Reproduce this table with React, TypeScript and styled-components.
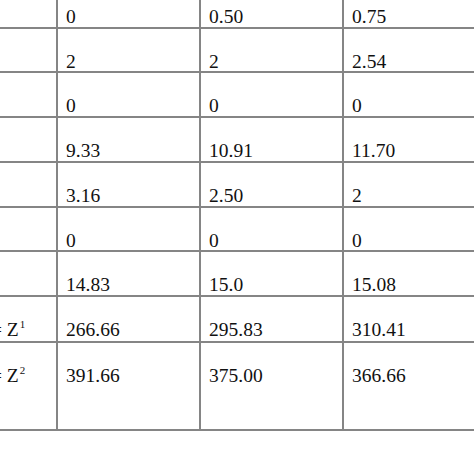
import React from 'react';
import styled, { createGlobalStyle } from 'styled-components';

type RowData = {
  h: number;
  label?: React.ReactNode;
  values: string[];
};

const rows: RowData[] = [
  { h: 45, values: ['0', '0.50', '0.75'] },
  { h: 44, values: ['2', '2', '2.54'] },
  { h: 45, values: ['0', '0', '0'] },
  { h: 45, values: ['9.33', '10.91', '11.70'] },
  { h: 45, values: ['3.16', '2.50', '2'] },
  { h: 44, values: ['0', '0', '0'] },
  { h: 45, values: ['14.83', '15.0', '15.08'] },
  {
    h: 46,
    label: (
      <>
        = Z<sup>1</sup>
      </>
    ),
    values: ['266.66', '295.83', '310.41'],
  },
  {
    h: 88,
    label: (
      <>
        = Z<sup>2</sup>
      </>
    ),
    values: ['391.66', '375.00', '366.66'],
  },
];

const App: React.FC = () => {
  return (
    <>
      <GlobalStyle />
      <Page>
        <Table>
          {rows.map((row, i) => (
            <Row key={i} $h={row.h}>
              <LabelCell>{row.label}</LabelCell>
              {row.values.map((v, j) => (
                <Cell key={j}>{v}</Cell>
              ))}
            </Row>
          ))}
        </Table>
      </Page>
    </>
  );
};

const GlobalStyle = createGlobalStyle`
  html, body {
    margin: 0;
    padding: 0;
    background: #fff;
    overflow: hidden;
  }
`;

const Page = styled.div`
  width: 474px;
  height: 474px;
  overflow: hidden;
  background: #fff;
  font-family: 'Liberation Serif', 'Times New Roman', serif;
  color: #111;
`;

const Table = styled.div`
  display: flex;
  flex-direction: column;
  width: 487px;
  margin-top: -16px;
`;

const Row = styled.div<{ $h: number }>`
  display: grid;
  grid-template-columns: 58px 143px 143px 143px;
  height: ${(p) => p.$h}px;
  box-sizing: border-box;
  border-bottom: 2px solid #858585;
`;

const Cell = styled.div`
  box-sizing: border-box;
  border-right: 2px solid #858585;
  padding: 22px 0 0 8px;
  font-size: 19.5px;
  line-height: 22px;
  white-space: nowrap;

  &:last-child {
    border-right: none;
  }
`;

const LabelCell = styled(Cell)`
  padding-left: 0;
  text-indent: -9px;

  sup {
    font-size: 11px;
    line-height: 0;
    vertical-align: 8px;
    margin-left: 1px;
  }
`;

export default App;
